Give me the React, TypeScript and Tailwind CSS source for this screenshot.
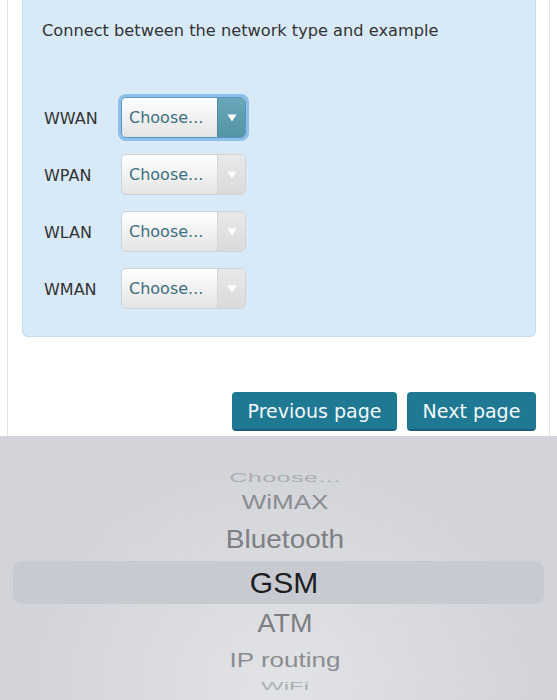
import React from "react";

const rows = ["WWAN", "WPAN", "WLAN", "WMAN"];

function Select({ focused }: { focused?: boolean }) {
  return (
    <div
      className={`flex h-[41px] w-[125px] overflow-hidden rounded-[5px] border ${
        focused
          ? "border-[#5b95c4] ring-[3px] ring-[#8dbfe8]"
          : "border-[#cdd3d6]"
      } bg-gradient-to-b from-[#ffffff] to-[#e4e4e4]`}
    >
      <div className="flex flex-1 items-center pl-[7px] text-[16px] text-[#3d6f80]">
        Choose...
      </div>
      <div
        className={`flex w-[28px] items-center justify-center border-l ${
          focused
            ? "border-[#4f8ea2] bg-gradient-to-b from-[#6aa7ba] to-[#5593a7]"
            : "border-[#d6d6d6] bg-gradient-to-b from-[#e9e9e9] to-[#dadada]"
        }`}
      >
        <svg width="10" height="8" viewBox="0 0 10 8">
          <path d="M0.5 0.5 L9.5 0.5 L5 7.5 Z" fill="#ffffff" />
        </svg>
      </div>
    </div>
  );
}

export default function App() {
  return (
    <main className="h-[700px] w-[557px] overflow-hidden bg-white font-['DejaVu_Sans',sans-serif]">
      <section className="h-[436px] overflow-hidden">
        <div className="mx-[7px] h-full border-x border-[#e2e2e2] pl-[14px] pr-[13px]">
          <div className="h-[337px] rounded-b-[6px] border border-t-0 border-[#c4dcee] bg-[#d8eaf7] pl-[19px] pt-[21px]">
            <h1 className="text-[16.2px] leading-[20px] text-[#333]">
              Connect between the network type and example
            </h1>
            <div className="mt-[56px] flex flex-col gap-[16px]">
              {rows.map((r, i) => (
                <div key={r} className="flex items-center">
                  <div className="w-[79px] pl-[2px] pt-[2px] text-[16px] text-[#333]">{r}</div>
                  <Select focused={i === 0} />
                </div>
              ))}
            </div>
          </div>
          <div className="mt-[55px] flex justify-end gap-[10px]">
            <button className="h-[39px] w-[165px] rounded-[4px] border-b-2 border-[#17627a] bg-[#1f7993] pt-[2px] text-[19px] text-[#f2f8fa]">
              Previous page
            </button>
            <button className="h-[39px] w-[129px] rounded-[4px] border-b-2 border-[#17627a] bg-[#1f7993] pt-[2px] text-[19px] text-[#f2f8fa]">
              Next page
            </button>
          </div>
        </div>
      </section>

      <section className="flex h-[264px] flex-col bg-[radial-gradient(ellipse_at_50%_95%,#e1e3e6,#d2d4d9_65%)] pt-[29px] font-['Liberation_Sans',Arial,sans-serif]">
        <div className="flex h-[24px] items-center justify-center pl-[13px]">
          <div className="scale-y-[0.5] text-[25px] leading-none tracking-[0.5px] text-[#abadb1]">Choose...</div>
        </div>
        <div className="flex h-[26px] items-center justify-center pl-[13px]">
          <div className="scale-y-[0.78] text-[26px] leading-none text-[#8a8c90]">WiMAX</div>
        </div>
        <div className="flex h-[46px] items-center justify-center pl-[13px] pt-[4px]">
          <div className="scale-y-[0.92] text-[28px] leading-none text-[#7e8084]">Bluetooth</div>
        </div>
        <div className="mx-[13px] flex h-[43px] items-center justify-center rounded-[9px] bg-[#c7cad0] pl-[11px]">
          <div className="text-[30px] leading-none text-[#1d1d1f]">GSM</div>
        </div>
        <div className="flex h-[38px] items-center justify-center pl-[13px]">
          <div className="scale-y-[0.95] text-[27px] leading-none text-[#7c7e82]">ATM</div>
        </div>
        <div className="flex h-[36px] items-center justify-center pl-[13px]">
          <div className="scale-y-[0.8] text-[26px] leading-none text-[#8b8d91]">IP routing</div>
        </div>
        <div className="flex h-[16px] items-center justify-center pl-[13px]">
          <div className="scale-y-[0.45] text-[24px] leading-none text-[#aeb0b4]">WiFi</div>
        </div>
      </section>
    </main>
  );
}
